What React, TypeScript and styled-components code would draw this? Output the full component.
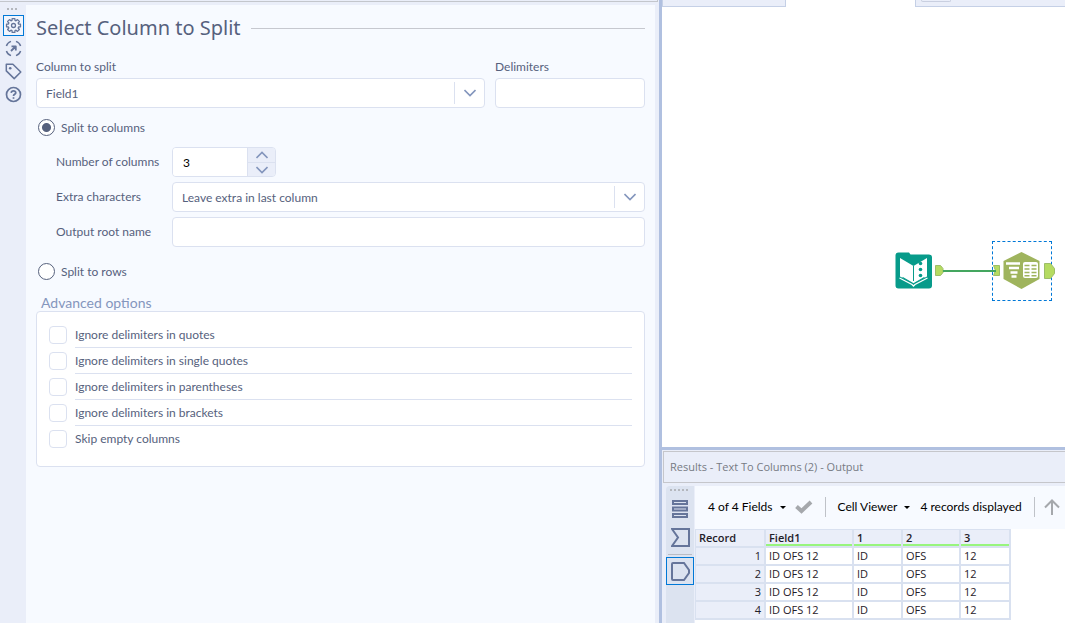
import React, { useState } from "react";
import styled, { createGlobalStyle, css } from "styled-components";

const c = {
  lilac: "#eaeef9",
  panel: "#f7faff",
  line: "#dbe1f0",
  ink: "#56617d",
  soft: "#8496bd",
  splitter: "#b0c0e0",
  focus: "#0078d7",
  icon: "#65759a",
};

const GlobalStyle = createGlobalStyle`
  *, *::before, *::after { box-sizing: border-box; }
  body { margin: 0; background: ${c.panel}; }
  body, button, input, select {
    font-family: Lato, "Open Sans", sans-serif;
    font-size: 12px;
    line-height: 16px;
    color: ${c.ink};
  }
  button { padding: 0; border: 0; background: none; }
`;

const Page = styled.div`
  display: grid;
  grid-template-columns: 659fr 3px 403fr;
  min-height: 100vh;
  overflow: hidden;
`;

const Divider = styled.div`
  background: ${c.splitter};
`;

/* Configuration pane */

const ConfigPane = styled.section`
  display: grid;
  grid-template-columns: 26px minmax(0, 1fr);
  grid-template-rows: 5px 1fr;
  padding-right: 4px;
  background: ${c.lilac};
`;

const TopEdge = styled.div`
  grid-column: 1 / -1;
  height: 2px;
  margin-right: -3px;
  border: solid #c3c6cc;
  border-width: 0 1px 1px 0;
`;

const Rail = styled.nav`
  display: flex;
  flex-direction: column;
  align-items: center;
  gap: 2px;
`;

const Grip = styled.div<{ $dots: number }>`
  width: ${(p) => p.$dots * 4}px;
  height: 2px;
  background: repeating-linear-gradient(90deg, #b4b7bd 0 2px, transparent 2px 4px);
`;

const RailButton = styled.button<{ $active?: boolean }>`
  display: grid;
  place-items: center;
  width: 21px;
  height: 21px;
  color: ${c.icon};
  ${(p) =>
    p.$active &&
    css`
      border: 1px solid ${c.focus};
      background: #f1f5fd;
    `}
`;

const RailGrip = styled(Grip)`
  margin: 3px 0;
`;

const Form = styled.form`
  padding: 7px 10px 16px;
  background: ${c.panel};
`;

const Heading = styled.h1`
  display: flex;
  align-items: center;
  gap: 10px;
  margin: 0 0 15px;
  font-family: "Noto Sans", sans-serif;
  font-size: 20px;
  line-height: 32px;
  font-weight: 400;
  white-space: nowrap;

  &::after {
    content: "";
    flex: 1;
    height: 1px;
    background: #c6c8cf;
  }
`;

const SplitFields = styled.div`
  display: grid;
  grid-template-columns: minmax(0, 1fr) 150px;
  column-gap: 10px;
`;

const Field = styled.div`
  display: flex;
  flex-direction: column;
  gap: 3px;
`;

const Label = styled.label`
  white-space: nowrap;
`;

const box = css`
  width: 100%;
  height: 30px;
  border: 1px solid ${c.line};
  border-radius: 4px;
  background: #fff;
  outline: 0;
`;

const TextBox = styled.input`
  ${box}
  padding: 0 9px;
`;

const SelectWrap = styled.div`
  position: relative;
`;

const SelectBox = styled.select`
  ${box}
  appearance: none;
  padding: 1px 40px 0 9px;
`;

const SelectMark = styled.span`
  position: absolute;
  top: 4px;
  right: 1px;
  display: grid;
  place-items: center;
  width: 30px;
  height: 22px;
  border-left: 1px solid ${c.line};
  color: ${c.soft};
  pointer-events: none;
`;

const Choice = styled.label`
  display: flex;
  align-items: center;
  gap: 6px;
  height: 17px;
  padding-left: 2px;
`;

const Radio = styled.input`
  appearance: none;
  width: 17px;
  height: 17px;
  margin: 0;
  border: 1px solid ${c.ink};
  border-radius: 50%;
  background: #fff;

  &:checked {
    background: radial-gradient(circle, ${c.ink} 4px, #fff 5px);
  }
`;

const ColumnChoice = styled(Choice)`
  margin: 11px 0;
`;

const Details = styled.div`
  display: grid;
  grid-template-columns: 106px minmax(0, 1fr);
  gap: 5px 10px;
  align-items: center;
  padding-left: 20px;
  margin-bottom: 16px;
`;

const Spinner = styled.div`
  display: grid;
  grid-template-columns: 74px 28px;
  width: 104px;
  height: 30px;
  border: 1px solid ${c.line};
  border-radius: 4px;
  overflow: hidden;
`;

const SpinnerValue = styled.input`
  width: 100%;
  padding: 2px 10px 0;
  border: 0;
  background: #fff;
  color: #000;
  outline: 0;
`;

const SpinnerButtons = styled.div`
  display: grid;
  grid-template-rows: 1fr 1fr;
  border-left: 1px solid ${c.line};
  background: ${c.lilac};
`;

const SpinnerButton = styled.button`
  display: grid;
  place-items: center;
  color: ${c.soft};

  & + & {
    border-top: 1px solid ${c.line};
  }
`;

const Advanced = styled.fieldset`
  min-width: 0;
  margin: 14px 0 0;
  padding: 0;
  border: 0;
`;

const AdvancedTitle = styled.legend`
  padding: 0 5px;
  font-size: 14px;
  line-height: 17px;
  color: ${c.soft};
`;

const OptionList = styled.div`
  padding: 10px 12px 14px;
  border: 1px solid ${c.line};
  border-radius: 4px;
  background: #fff;
`;

const Option = styled.label`
  display: grid;
  grid-template-columns: 18px 1fr;
  column-gap: 8px;
  align-items: center;
  height: 26px;
`;

const OptionText = styled.span`
  height: 26px;
  line-height: 26px;
  border-bottom: 1px solid ${c.line};

  ${Option}:last-child & {
    border-bottom: 0;
  }
`;

const Check = styled.input`
  appearance: none;
  width: 18px;
  height: 18px;
  margin: 0;
  border: 1px solid ${c.line};
  border-radius: 4px;
  background: #fff;

  &:checked {
    background: ${c.soft};
  }
`;

/* Workflow canvas */

const WorkPane = styled.div`
  display: flex;
  flex-direction: column;
  min-width: 0;
`;

const Canvas = styled.main`
  position: relative;
  flex: 1;
  background: #fff;
  overflow: hidden;
`;

const CanvasTabs = styled.div`
  display: grid;
  grid-template-columns: 124px 129px 1fr;
  height: 7px;
`;

const CanvasTab = styled.div`
  border: solid #c5d0e6;
  border-width: 0 1px 1px;
  background: ${c.lilac};

  &:last-child {
    grid-column: 3;
    padding-left: 5px;
    border-right: 0;
  }
`;

const TabMark = styled.div`
  width: 30px;
  height: 2px;
  border: solid #c9cfe0;
  border-width: 0 1px 1px;
  border-radius: 0 0 3px 3px;
`;

const Node = styled.div<{ $x: number; $y: number; $selected?: boolean }>`
  position: absolute;
  left: ${(p) => p.$x}px;
  top: ${(p) => p.$y}px;
  svg {
    display: block;
    overflow: visible;
  }
  ${(p) => p.$selected && css`border: 1px dashed ${c.focus};`}
`;

/* Results pane */

const Results = styled.section`
  height: 173px;
  padding: 1px 0 0 1px;
  background: ${c.lilac};
`;

const ResultsTitle = styled.h2`
  margin: 0;
  padding: 0 6px;
  border: 1px solid #c5c6cb;
  border-right: 0;
  font-family: "Open Sans", sans-serif;
  font-size: 11px;
  font-weight: 400;
  line-height: 30px;
  color: #777b84;
`;

const ResultsBody = styled.div`
  display: grid;
  grid-template-columns: 28px minmax(0, 1fr);
  column-gap: 1px;
  height: 137px;
  margin: 3px 0 0 3px;
`;

const ResultsRail = styled.nav`
  display: flex;
  flex-direction: column;
  align-items: center;
  background: #dce3f0;
  border-radius: 4px 0 0 0;
  padding-top: 3px;
`;

const ResultsRailButton = styled.button<{ $active?: boolean }>`
  display: grid;
  place-items: center;
  width: 28px;
  height: 28px;
  color: ${c.icon};
  ${(p) => p.$active && css`border: 1px solid ${c.focus};`}
`;

const ResultsRailGrip = styled(Grip)`
  margin-bottom: 4px;
`;

const RailRule = styled.div`
  width: 24px;
  height: 1px;
  margin: 3px 0 2px;
  background: #b9bcc4;
`;

const ResultsMain = styled.div`
  background: #fff;
  overflow: hidden;
`;

const Toolbar = styled.div`
  display: flex;
  align-items: center;
  height: 43px;
  padding: 0 0 1px 13px;
  background: ${c.panel};
  white-space: nowrap;
  color: #000;
`;

const MenuButton = styled.button`
  display: flex;
  align-items: center;
  gap: 7px;
  color: #000;
  white-space: nowrap;

  &::after {
    content: "";
    border: 3px solid transparent;
    border-top-color: #000;
    border-bottom: 0;
  }
`;

const IconButton = styled.button`
  display: grid;
  place-items: center;
  flex: none;
  color: #a5a8ac;
`;

const ApplyButton = styled(IconButton)`
  margin-left: 9px;
`;

const Separator = styled.span`
  flex: none;
  width: 1px;
  height: 20px;
  margin: 0 12px;
  background: #bfc2c8;
`;

const RecordCount = styled.span`
  margin-left: 10px;
`;

const PreviousButton = styled(IconButton)`
  margin-left: -3px;
`;

const Table = styled.table`
  width: 316px;
  table-layout: fixed;
  border-spacing: 0;
  font-family: "Open Sans", sans-serif;
  font-size: 11px;
  line-height: 16px;
  color: #1f2028;
`;

const cell = css`
  height: 18px;
  padding: 0 3px;
  border: solid #d9e1f0;
  border-width: 0 2px 2px 0;
  text-align: left;
  font-weight: 400;
  white-space: nowrap;

  &:first-child {
    border-left-width: 1px;
  }
`;

const HeadCell = styled.th<{ $width: number; $data?: boolean }>`
  ${cell}
  width: ${(p) => p.$width}px;
  border-top-width: 1px;
  background: ${c.lilac};
  font-weight: 600;
  ${(p) => p.$data && css`box-shadow: inset 0 -2px #98f57d;`}
`;

const RowHead = styled.th`
  ${cell}
  background: ${c.lilac};
  text-align: right;
`;

const Cell = styled.td`
  ${cell}
`;

const Chevron = ({ up }: { up?: boolean }) => (
  <svg width="12" height="8" viewBox="0 0 12 8" fill="none" stroke="currentColor" strokeWidth="1.6" aria-hidden="true">
    <path d={up ? "M.5 7 6 1.5 11.5 7" : "M.5 1 6 6.5 11.5 1"} />
  </svg>
);

const railIcon = {
  width: 17,
  height: 17,
  viewBox: "0 0 17 17",
  fill: "none",
  stroke: "currentColor",
  strokeWidth: 1.5,
  strokeLinejoin: "round" as const,
};

const GEAR_TEETH = 8;

/* Outline of a cog: each tooth rises from the inner radius to the outer one and back. */
const gearPath = (() => {
  const points: string[] = [];
  for (let i = 0; i < GEAR_TEETH; i++) {
    const mid = (i / GEAR_TEETH) * Math.PI * 2;
    [[-0.29, 5.3], [-0.19, 7.1], [0.19, 7.1], [0.29, 5.3]].forEach(([da, r]) => {
      points.push(`${(8.5 + r * Math.sin(mid + da)).toFixed(2)} ${(8.5 - r * Math.cos(mid + da)).toFixed(2)}`);
    });
  }
  return `M${points.join("L")}Z`;
})();

const options = [
  "Ignore delimiters in quotes",
  "Ignore delimiters in single quotes",
  "Ignore delimiters in parentheses",
  "Ignore delimiters in brackets",
  "Skip empty columns",
];

const columns = [
  { name: "Field1", width: 88 },
  { name: "1", width: 49 },
  { name: "2", width: 58 },
  { name: "3", width: 50 },
];

const records = [1, 2, 3, 4].map((id) => ({ id, values: ["ID OFS 12", "ID", "OFS", "12"] }));

function Configuration() {
  const [mode, setMode] = useState("columns");
  const [count, setCount] = useState(3);
  return (
    <ConfigPane>
      <TopEdge />
      <Rail aria-label="Configuration views">
        <RailGrip $dots={3} />
        <RailButton $active aria-label="Configuration">
          <svg {...railIcon} strokeWidth={1.3}>
            <path d={gearPath} />
            <circle cx="8.5" cy="8.5" r="2" />
          </svg>
        </RailButton>
        <RailButton aria-label="Navigation">
          <svg {...railIcon}>
            <path d="M1.4 6A7.3 7.3 0 0 1 6 1.4M11 1.4A7.3 7.3 0 0 1 15.6 6M15.6 11A7.3 7.3 0 0 1 11 15.6M6 15.6A7.3 7.3 0 0 1 1.4 11" />
            <path d="M6 11l4.500-4.500M6.500 6.300h4.300v4.300" strokeWidth="1.8" />
          </svg>
        </RailButton>
        <RailButton aria-label="Annotation">
          <svg {...railIcon}>
            <path d="M1.3 1.3h6.600l7.900 7.700-6.600 6.600L1.300 7.900Z" />
            <circle cx="5.2" cy="5.2" r="1.3" fill="currentColor" stroke="none" />
          </svg>
        </RailButton>
        <RailButton aria-label="Help">
          <svg {...railIcon} strokeWidth={1.7}>
            <circle cx="8.5" cy="8.5" r="7" />
            <path d="M6.2 6.800Q6.400 4.900 8.500 4.900T10.800 6.800C10.800 8.300 8.500 8.300 8.500 9.900" />
            <path d="M8.5 11.2v1.6" />
          </svg>
        </RailButton>
      </Rail>
      <Form onSubmit={(e) => e.preventDefault()}>
        <Heading>Select Column to Split</Heading>
        <SplitFields>
          <Field>
            <Label htmlFor="column">Column to split</Label>
            <SelectWrap>
              <SelectBox id="column">
                <option>Field1</option>
              </SelectBox>
              <SelectMark><Chevron /></SelectMark>
            </SelectWrap>
          </Field>
          <Field>
            <Label htmlFor="delimiters">Delimiters</Label>
            <TextBox id="delimiters" />
          </Field>
        </SplitFields>
        <ColumnChoice>
          <Radio type="radio" name="mode" checked={mode === "columns"} onChange={() => setMode("columns")} />
          Split to columns
        </ColumnChoice>
        <Details>
          <Label htmlFor="count">Number of columns</Label>
          <Spinner>
            <SpinnerValue id="count" inputMode="numeric" value={count} onChange={(e) => setCount(Number(e.target.value) || 0)} />
            <SpinnerButtons>
              <SpinnerButton type="button" aria-label="Increase" onClick={() => setCount(count + 1)}><Chevron up /></SpinnerButton>
              <SpinnerButton type="button" aria-label="Decrease" onClick={() => setCount(count - 1)}><Chevron /></SpinnerButton>
            </SpinnerButtons>
          </Spinner>
          <Label htmlFor="extra">Extra characters</Label>
          <SelectWrap>
            <SelectBox id="extra">
              <option>Leave extra in last column</option>
            </SelectBox>
            <SelectMark><Chevron /></SelectMark>
          </SelectWrap>
          <Label htmlFor="root-name">Output root name</Label>
          <TextBox id="root-name" />
        </Details>
        <Choice>
          <Radio type="radio" name="mode" checked={mode === "rows"} onChange={() => setMode("rows")} />
          Split to rows
        </Choice>
        <Advanced>
          <AdvancedTitle>Advanced options</AdvancedTitle>
          <OptionList>
            {options.map((text) => (
              <Option key={text}>
                <Check type="checkbox" />
                <OptionText>{text}</OptionText>
              </Option>
            ))}
          </OptionList>
        </Advanced>
      </Form>
    </ConfigPane>
  );
}

function Workflow() {
  return (
    <Canvas>
      <CanvasTabs>
        <CanvasTab />
        <CanvasTab><TabMark /></CanvasTab>
      </CanvasTabs>
      <Node $x={233} $y={252}>
        <svg width="49" height="37" viewBox="0 0 49 37" role="img" aria-label="Text Input tool">
          <path d="M3.5 .5H14l1.500 2H34a3 3 0 0 1 3 3V33.500a3 3 0 0 1-3 3H3.500a3 3 0 0 1-3-3V3.500a3 3 0 0 1 3-3Z" fill="#079b8a" />
          <path d="M5 6 18.500 14v17.500L5 24.500ZM18.500 14 32 6v18.500L18.500 31.500Z" fill="#fff" />
          <path d="M18.500 14v15" fill="none" stroke="#079b8a" />
          <path d="M7.500 25.500 17 31l1.500 1.500L20 31l9.500-5.500" fill="none" stroke="#079b8a" strokeWidth="1.300" />
          <path d="M4.500 26 17 32.500l1.500 1.500 1.500-1.500L32.500 26" fill="none" stroke="#fff" strokeWidth="1.300" />
          <g fill="#079b8a">
            <circle cx="25.5" cy="11.5" r="1.8" />
            <circle cx="25.5" cy="17.5" r="1.8" />
            <circle cx="25.5" cy="23.5" r="1.8" />
          </g>
          <path d="M40.5 13.500h5l2.500 3v4l-2.500 3h-5Z" fill="#b5db61" stroke="#9dbd69" />
        </svg>
      </Node>
      <Node $x={330} $y={241} $selected>
        <svg width="58" height="58" viewBox="0 0 58 58" role="img" aria-label="Text To Columns tool">
          <path d="M.5 23.500h6v10h-6l2-5Z" fill="#b5db61" stroke="#9dbd69" />
          <path d="m28.500 10 18 9v18l-18 10-18-10V19Z" fill="#9fb45d" />
          <path d="M13 21.500h14M16 26h10M17.500 30.500h7M18.500 34.500h5" stroke="#fff" strokeWidth="2.400" />
          <rect x="30" y="20" width="15" height="16" rx="2" fill="#fff" />
          <path d="M31.500 23.500h5M38.500 23.500h5M31.500 27h5M38.500 27h5M31.500 30.500h5M38.500 30.500h5M31.500 33.700h5M38.500 33.700h5" stroke="#9fb45d" strokeWidth="1.500" />
          <path d="M51.500 21.500h6l4 5v5l-4 5h-6Z" fill="#b5db61" stroke="#9dbd69" />
        </svg>
      </Node>
      <Node $x={281} $y={269}>
        <svg width="53" height="4" viewBox="0 0 53 4" aria-hidden="true">
          <path d="M0 2h53" stroke="#44a65f" strokeWidth="2" />
        </svg>
      </Node>
    </Canvas>
  );
}

function ResultsPane() {
  return (
    <Results>
      <ResultsTitle>Results - Text To Columns (2) - Output</ResultsTitle>
      <ResultsBody>
        <ResultsRail aria-label="Results views">
          <ResultsRailGrip $dots={5} />
          <ResultsRailButton aria-label="Messages">
            <svg width="16" height="18" viewBox="0 0 16 18" fill="none" stroke="currentColor" strokeWidth="2">
              <path d="M1 1h14v3H1ZM1 7.500h14v3H1ZM1 14h14v3H1Z" />
            </svg>
          </ResultsRailButton>
          <ResultsRailButton aria-label="Input anchor">
            <svg width="19" height="19" viewBox="0 0 19 19" fill="none" stroke="currentColor" strokeWidth="2">
              <path d="M1 1h17v17H1l6-8.500Z" />
            </svg>
          </ResultsRailButton>
          <RailRule />
          <ResultsRailButton $active aria-label="Output anchor">
            <svg width="19" height="19" viewBox="0 0 19 19" fill="none" stroke="currentColor" strokeWidth="2">
              <path d="M2 1h11l5 7v3l-5 7H2a1 1 0 0 1-1-1V2a1 1 0 0 1 1-1Z" />
            </svg>
          </ResultsRailButton>
        </ResultsRail>
        <ResultsMain>
          <Toolbar>
            <MenuButton>4 of 4 Fields</MenuButton>
            <ApplyButton aria-label="Apply">
              <svg width="18" height="14" viewBox="0 0 18 14" fill="none" stroke="currentColor" strokeWidth="4">
                <path d="m1.500 6.500 5 4.500L16 2" />
              </svg>
            </ApplyButton>
            <Separator />
            <MenuButton>Cell Viewer</MenuButton>
            <RecordCount>4 records displayed</RecordCount>
            <Separator />
            <PreviousButton aria-label="Previous">
              <svg width="16" height="16" viewBox="0 0 16 16" fill="none" stroke="currentColor" strokeWidth="2">
                <path d="M8 16V1.500M1 8.500l7-7 7 7" />
              </svg>
            </PreviousButton>
          </Toolbar>
          <Table>
            <thead>
              <tr>
                <HeadCell $width={71}>Record</HeadCell>
                {columns.map((col) => (
                  <HeadCell key={col.name} $width={col.width} $data>{col.name}</HeadCell>
                ))}
              </tr>
            </thead>
            <tbody>
              {records.map((r) => (
                <tr key={r.id}>
                  <RowHead scope="row">{r.id}</RowHead>
                  {r.values.map((v, i) => <Cell key={i}>{v}</Cell>)}
                </tr>
              ))}
            </tbody>
          </Table>
        </ResultsMain>
      </ResultsBody>
    </Results>
  );
}

const HorizontalDivider = styled(Divider)`
  height: 3px;
`;

export default function App() {
  return (
    <>
      <GlobalStyle />
      <Page>
        <Configuration />
        <Divider />
        <WorkPane>
          <Workflow />
          <HorizontalDivider />
          <ResultsPane />
        </WorkPane>
      </Page>
    </>
  );
}
